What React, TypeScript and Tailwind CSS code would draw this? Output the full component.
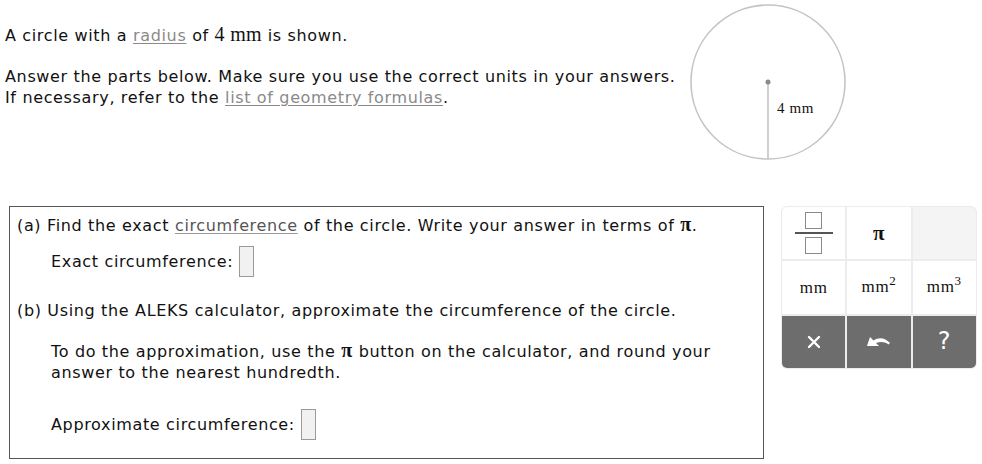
import React from "react";

const sans = { fontFamily: '"DejaVu Sans", Verdana, sans-serif' };
const serif = { fontFamily: '"Liberation Serif", serif' };

const AnswerBox = () => (
  <span className="inline-block align-middle w-[15px] h-[31px] border border-[#9a9a9a] bg-[#f1f1f1] ml-[6px]" />
);

const Circle = () => (
  <svg width="170" height="170" viewBox="0 0 170 170">
    <circle cx="80" cy="80" r="77" fill="none" stroke="#c4c4c4" strokeWidth="1.6" />
    <line x1="80" y1="80" x2="80" y2="157" stroke="#c4c4c4" strokeWidth="1.6" />
    <circle cx="80" cy="80" r="2.5" fill="#8a8a8a" />
    <text x="89" y="111" fontFamily='"Liberation Serif", serif' fontSize="15" fill="#111">
      4 mm
    </text>
  </svg>
);

const Calculator = () => (
  <div className="w-[196px] h-[163px] bg-[#ececec] rounded-[6px] overflow-hidden grid grid-cols-3 grid-rows-3 gap-[2px] p-[1px]">
    <div className="bg-white flex items-center justify-center rounded-tl-[5px]">
      <div className="flex flex-col items-center">
        <div className="w-[17px] h-[17px] border-[1.5px] border-[#8a8a8a]" />
        <div className="w-[38px] h-[2px] bg-[#555] my-[3px]" />
        <div className="w-[17px] h-[17px] border-[1.5px] border-[#8a8a8a]" />
      </div>
    </div>
    <div className="bg-white flex items-center justify-center text-[21px] font-bold text-[#111]" style={serif}>
      π
    </div>
    <div className="bg-[#f4f4f4] rounded-tr-[5px]" />
    {["", "2", "3"].map((sup, i) => (
      <div
        key={i}
        className="bg-white flex items-center justify-center text-[17px] text-[#111]"
        style={serif}
      >
        <span>
          mm
          {sup && <span className="text-[13px] relative -top-[7px]">{sup}</span>}
        </span>
      </div>
    ))}
    <div className="bg-[#6d6d6d] flex items-center justify-center rounded-bl-[5px]">
      <svg width="16" height="16" viewBox="0 0 16 16">
        <path d="M3 3 L13 13 M13 3 L3 13" stroke="white" strokeWidth="2.4" strokeLinecap="round" />
      </svg>
    </div>
    <div className="bg-[#6d6d6d] flex items-center justify-center">
      <svg width="26" height="16" viewBox="0 0 26 16">
        <path d="M1 12 L4 3 L7.5 6.5 C13 3 19 3.5 24 9 L22.5 10.5 C18.5 7.5 14 7.5 10 9 L13 12 Z" fill="white" />
      </svg>
    </div>
    <div className="bg-[#6d6d6d] flex items-center justify-center text-white text-[24px] rounded-br-[5px]" style={sans}>
      ?
    </div>
  </div>
);

export default function App() {
  return (
    <div
      className="w-[982px] h-[464px] bg-white text-[#111] text-[16px] leading-[21px] tracking-[0.65px] relative"
      style={sans}
    >
      <div className="flex">
        <div className="pl-[5px] pt-[24px] w-[683px]">
          <p>
            A circle with a{" "}
            <span className="text-[#8a8a8a] underline underline-offset-2">radius</span> of{" "}
            <span className="text-[20px] tracking-[0.3px]" style={serif}>
              4 mm
            </span>{" "}
            is shown.
          </p>
          <p className="mt-[20px]">Answer the parts below. Make sure you use the correct units in your answers.</p>
          <p>
            If necessary, refer to the{" "}
            <span className="text-[#8a8a8a] underline underline-offset-2">list of geometry formulas</span>.
          </p>
        </div>
        <div className="pt-[2px] pl-[5px]">
          <Circle />
        </div>
      </div>
      <div className="flex items-start mt-[34px] pl-[9px]">
        <div className="w-[755px] h-[253px] border-[1.5px] border-[#555] pl-[7px] pt-[7px]">
          <p>
            (a) Find the exact{" "}
            <span className="text-[#555] underline underline-offset-2 decoration-[#999]">circumference</span> of the
            circle. Write your answer in terms of{" "}
            <span className="text-[20px] font-bold" style={serif}>π</span>.
          </p>
          <div className="pl-[34px] mt-[10px] flex items-center">
            Exact circumference:
            <AnswerBox />
          </div>
          <p className="mt-[23px]">(b) Using the ALEKS calculator, approximate the circumference of the circle.</p>
          <p className="pl-[34px] mt-[19px]">
            To do the approximation, use the{" "}
            <span className="text-[20px] font-bold" style={serif}>π</span> button on the calculator, and round your
            <br />
            answer to the nearest hundredth.
          </p>
          <div className="pl-[34px] mt-[26px] flex items-center">
            Approximate circumference:
            <AnswerBox />
          </div>
        </div>
        <div className="ml-[17px]">
          <Calculator />
        </div>
      </div>
    </div>
  );
}
